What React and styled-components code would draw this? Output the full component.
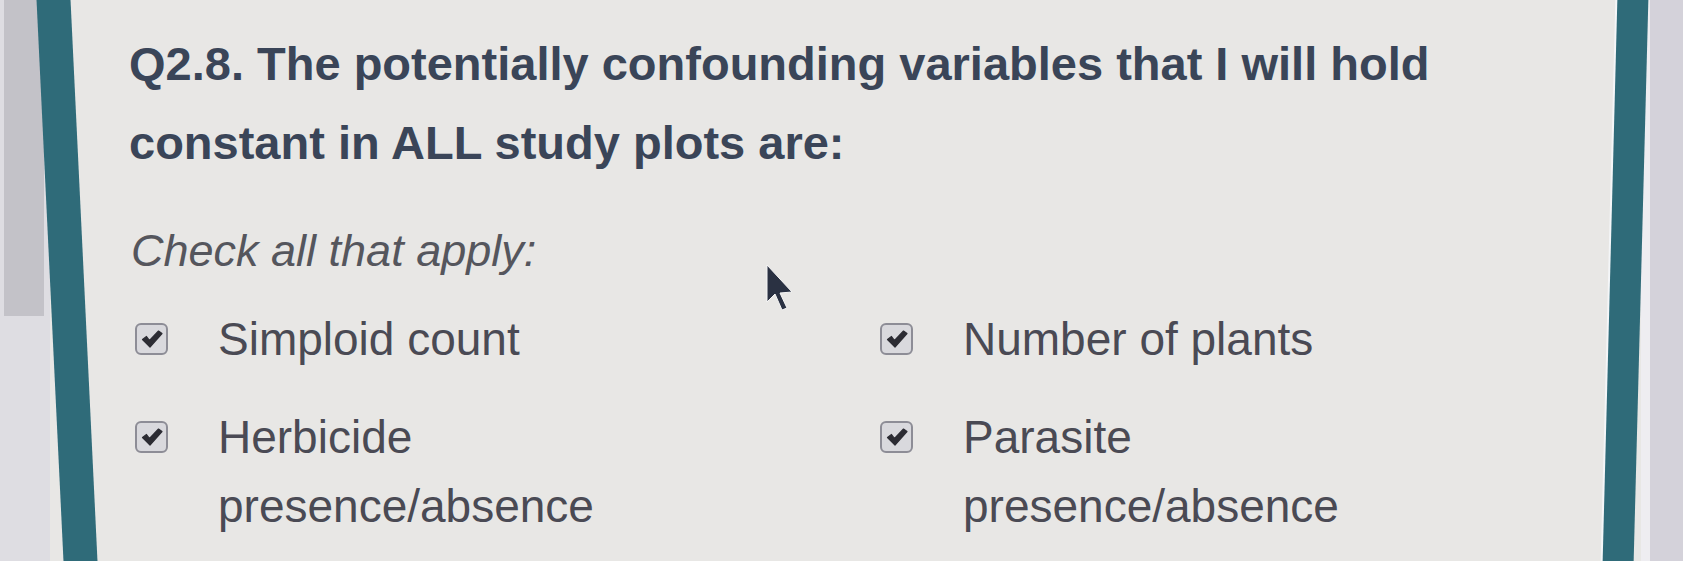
import React from "react";
import styled, { createGlobalStyle } from "styled-components";

const Global = createGlobalStyle`
  html, body { margin: 0; padding: 0; background: #e8e7e5; }
  body { font-family: "Liberation Sans", Arial, sans-serif; overflow: hidden; }
`;

const Page = styled.div`
  display: flex;
  width: 1683px;
  height: 561px;
  overflow: hidden;
  background: #e8e7e5;
`;

const LeftGutter = styled.div`
  flex: 0 0 50px;
  display: flex;
  flex-direction: column;
  background: #dedde2;
`;

const GutterBlock = styled.div`
  height: 316px;
  margin: 0 6px 0 4px;
  background: #c3c2c8;
`;

const EdgeBar = styled.div`
  flex: 0 0 ${(p) => p.$w}px;
  position: relative;
  z-index: 2;
  background: #2f6b79;
  transform: skewX(${(p) => p.$skew}deg);
  box-shadow: ${(p) => (p.$side === "right" ? "-2px 0 0 #f4f6f8" : "none")};
`;

const RightGutter = styled.div`
  flex: 1;
  display: flex;
  background: #d4d2da;
`;

const GutterHighlight = styled.div`
  flex: 0 0 9px;
  background: #eeedf1;
`;

const Card = styled.main`
  flex: 0 0 1526px;
  position: relative;
  z-index: 1;
  box-sizing: border-box;
  padding: 24px 0 0 45px;
  background: #e8e7e5;
`;

const Title = styled.h1`
  margin: 0;
  font-size: 47px;
  font-weight: 700;
  line-height: 79px;
  color: #3a4558;
  letter-spacing: 0;
`;

const Instruction = styled.p`
  margin: 44px 0 0 2px;
  font-size: 45px;
  font-style: italic;
  line-height: 50px;
  color: #55565d;
`;

const Options = styled.div`
  display: grid;
  grid-template-columns: 745px 600px;
  row-gap: 29px;
  margin: 29px 0 0 6px;
`;

const Option = styled.label`
  display: flex;
  align-items: flex-start;
`;

const Box = styled.span`
  flex: 0 0 auto;
  width: 29px;
  height: 28px;
  margin-top: 18px;
  border: 2px solid #8d8d96;
  border-radius: 6px;
  background: #d9d9dd;
  display: flex;
  align-items: center;
  justify-content: center;
`;

const Label = styled.span`
  margin-left: 50px;
  font-size: 46px;
  line-height: 69px;
  color: #4a4a54;
  max-width: 420px;
`;

const Cursor = styled.svg`
  position: absolute;
  left: 682px;
  top: 264px;
`;

const Check = () => (
  <svg width="22" height="20" viewBox="0 0 22 20">
    <path
      d="M1.5 10.5 L5.5 7.5 L8.5 11.5 L17.5 2 L21 4.5 L9 18 Z"
      fill="#2c2c33"
      stroke="#2c2c33"
      strokeWidth="1.2"
      strokeLinejoin="round"
    />
  </svg>
);

const items = [
  "Simploid count",
  "Number of plants",
  "Herbicide presence/absence",
  "Parasite presence/absence",
];

export default function App() {
  return (
    <>
      <Global />
      <Page>
        <LeftGutter>
          <GutterBlock />
        </LeftGutter>
        <EdgeBar $w={34} $skew={2.75} />
        <Card>
          <Title>
            Q2.8. The potentially confounding variables that I will hold
            <br />
            constant in ALL study plots are:
          </Title>
          <Instruction>Check all that apply:</Instruction>
          <Options>
            {items.map((t) => (
              <Option key={t}>
                <Box>
                  <Check />
                </Box>
                <Label>{t}</Label>
              </Option>
            ))}
          </Options>
          <Cursor width="30" height="48" viewBox="0 0 30 48">
            <path d="M1 1 L1 38 L9 30 L16 46 L21 44 L14 29 L26 28 Z" fill="#2a3142" stroke="#f5f5f5" strokeWidth="1" />
          </Cursor>
        </Card>
        <EdgeBar $w={31} $skew={-1.5} $side="right" />
        <RightGutter>
          <GutterHighlight />
        </RightGutter>
      </Page>
    </>
  );
}
